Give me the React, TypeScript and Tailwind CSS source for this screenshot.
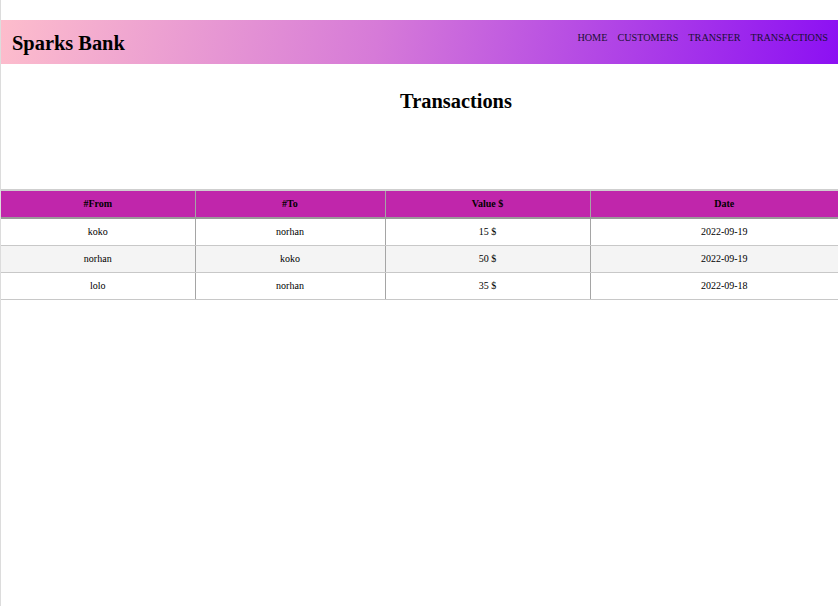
const rows = [
  { from: 'koko', to: 'norhan', value: '15 $', date: '2022-09-19' },
  { from: 'norhan', to: 'koko', value: '50 $', date: '2022-09-19' },
  { from: 'lolo', to: 'norhan', value: '35 $', date: '2022-09-18' },
]

const links = ['HOME', 'CUSTOMERS', 'TRANSFER', 'TRANSACTIONS']

export default function App() {
  return (
    <div className="min-h-[606px] w-[838px] overflow-hidden border-l border-[#dcdcdc] bg-white pt-5 font-['Liberation_Serif',serif] text-black">
      <header className="flex h-[44px] items-center justify-between bg-[linear-gradient(100deg,#fdbdcc_0%,#d67ad8_45%,#8c10f3_100%)] pl-[11px] pr-[10px]">
        <div className="mt-[2px] text-[20.4px] font-bold">Sparks Bank</div>
        <nav className="-mt-[9px] flex gap-[10px] text-[10.2px] text-[#1a1033]">
          {links.map((l) => (
            <a key={l} href="#">
              {l}
            </a>
          ))}
        </nav>
      </header>

      <h1 className="mt-[25px] pl-[73px] text-center text-[20.4px] font-bold leading-[24px]">Transactions</h1>

      <table className="mt-[76px] w-[857px] border-collapse text-center text-[10px]">
        <thead>
          <tr className="h-[28px] bg-[#c026ab]">
            <th className="w-[194px] border-t-2 border-b-2 border-t-[#cfcfcf] border-b-[#9a9a9a] pb-[2px] font-bold">#From</th>
            <th className="w-[190px] border-x border-t-2 border-b-2 border-x-[#a5a5a5] border-t-[#cfcfcf] border-b-[#9a9a9a] pb-[2px] font-bold">#To</th>
            <th className="w-[205px] border-x border-t-2 border-b-2 border-x-[#a5a5a5] border-t-[#cfcfcf] border-b-[#9a9a9a] pb-[2px] font-bold">Value $</th>
            <th className="border-t-2 border-b-2 border-t-[#cfcfcf] border-b-[#9a9a9a] pb-[2px] font-bold">Date</th>
          </tr>
        </thead>
        <tbody>
          {rows.map((r, i) => (
            <tr key={i} className={i % 2 === 1 ? 'h-[27px] bg-[#f4f4f4]' : 'h-[27px] bg-white'}>
              <td className="border-b border-[#c8c8c8] pb-[1px]">{r.from}</td>
              <td className="border-x border-b border-x-[#a5a5a5] border-b-[#c8c8c8] pb-[1px]">{r.to}</td>
              <td className="border-x border-b border-x-[#a5a5a5] border-b-[#c8c8c8] pb-[1px]">{r.value}</td>
              <td className="border-b border-[#c8c8c8] pb-[1px]">{r.date}</td>
            </tr>
          ))}
        </tbody>
      </table>
    </div>
  )
}
